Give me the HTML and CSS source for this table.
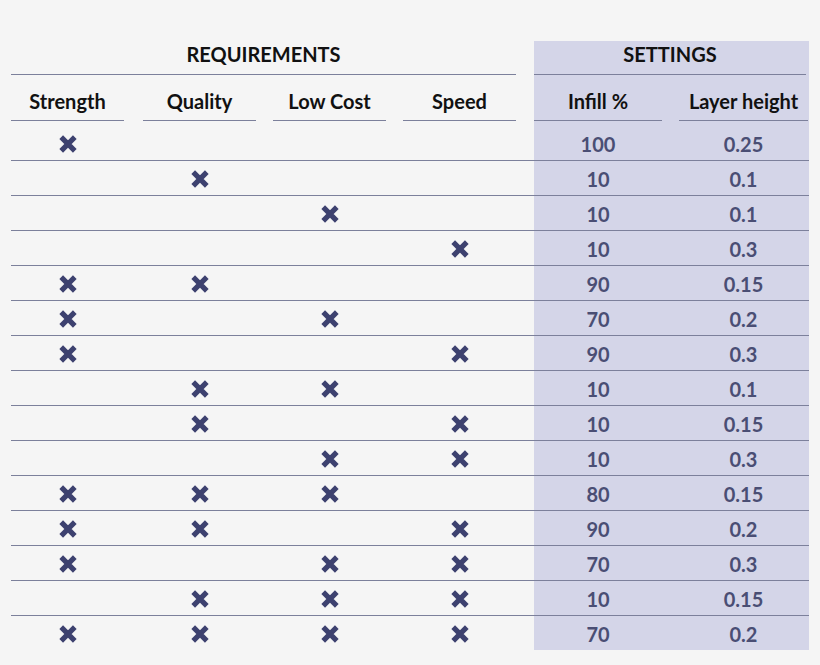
FILE: index.html
```html
<!DOCTYPE html>
<html>
<head>
<meta charset="utf-8">
<link rel="stylesheet" href="styles.css">
</head>
<body>
<div class="table">
  <div class="group-row">
    <div class="group req-group">REQUIREMENTS</div>
    <div class="group set-group">SETTINGS</div>
  </div>
  <div class="head-row cols">
    <div class="cell"><div class="hcell req">Strength</div></div>
    <div class="cell"><div class="hcell req">Quality</div></div>
    <div class="cell"><div class="hcell req">Low Cost</div></div>
    <div class="cell"><div class="hcell req">Speed</div></div>
    <div class="cell"><div class="hcell infill">Infill %</div></div>
    <div class="cell"><div class="hcell layer">Layer height</div></div>
  </div>
  <div class="body" id="body"></div>
</div>
<template id="x"><svg class="x" width="18" height="18" viewBox="0 0 18 18"><path d="M2.2 2.2 L15.8 15.8 M15.8 2.2 L2.2 15.8" stroke="#3d416f" stroke-width="5.2" fill="none"/></svg></template>
<script src="app.js"></script>
</body>
</html>
```
FILE: app.js
```js
const rows = [
  [1,0,0,0,'100','0.25'],
  [0,1,0,0,'10','0.1'],
  [0,0,1,0,'10','0.1'],
  [0,0,0,1,'10','0.3'],
  [1,1,0,0,'90','0.15'],
  [1,0,1,0,'70','0.2'],
  [1,0,0,1,'90','0.3'],
  [0,1,1,0,'10','0.1'],
  [0,1,0,1,'10','0.15'],
  [0,0,1,1,'10','0.3'],
  [1,1,1,0,'80','0.15'],
  [1,1,0,1,'90','0.2'],
  [1,0,1,1,'70','0.3'],
  [0,1,1,1,'10','0.15'],
  [1,1,1,1,'70','0.2']
];
const body = document.getElementById('body');
const xsvg = document.getElementById('x').innerHTML;
rows.forEach(r => {
  const row = document.createElement('div');
  row.className = 'row cols';
  for (let i = 0; i < 4; i++) {
    const c = document.createElement('div');
    c.className = 'cell';
    const d = document.createElement('div');
    d.className = 'dcell req';
    if (r[i]) d.innerHTML = xsvg;
    c.appendChild(d);
    row.appendChild(c);
  }
  [[r[4],'infill'],[r[5],'layer']].forEach(([v,k]) => {
    const c = document.createElement('div');
    c.className = 'cell';
    const d = document.createElement('div');
    d.className = 'dcell num ' + k;
    d.textContent = v;
    c.appendChild(d);
    row.appendChild(c);
  });
  body.appendChild(row);
});
```
FILE: styles.css
```css
html, body {
  margin: 0;
  padding: 0;
  background: #f5f5f5;
}
body {
  font-family: Lato, "Open Sans", sans-serif;
  font-weight: 700;
  font-size: 20px;
  color: #111;
}
.table {
  width: 798px;
  margin: 41px 0 0 11px;
  background: linear-gradient(90deg, transparent 523px, #d4d5e8 523px, #d4d5e8 798px, transparent 798px);
}
.group-row {
  display: grid;
  grid-template-columns: 523px 275px;
  height: 34px;
}
.group {
  line-height: 26px;
  text-align: center;
  border-bottom: 1px solid #7c809b;
  box-sizing: border-box;
  height: 34px;
}
.req-group { width: 505px; }
.set-group { width: 272px; }
.cols {
  display: grid;
  grid-template-columns: 132px 130px 130px 131px 145px 130px;
}
.head-row {
  height: 46px;
}
.hcell {
  box-sizing: border-box;
  height: 46px;
  padding-top: 13px;
  line-height: 26px;
  text-align: center;
  border-bottom: 1px solid #7c809b;
}
.req { width: 113px; }
.infill { width: 128px; }
.layer { width: 129px; }
.body {
  padding-top: 5px;
}
.row {
  height: 35px;
  box-sizing: border-box;
  border-bottom: 1px solid #7c809b;
}
.row:last-child {
  border-bottom: none;
  height: 34px;
}
.dcell {
  box-sizing: border-box;
  height: 34px;
  padding-top: 2px;
  display: flex;
  align-items: center;
  justify-content: center;
}
.num {
  color: #4a4e74;
  line-height: 32px;
}
.x { display: block; }
```
